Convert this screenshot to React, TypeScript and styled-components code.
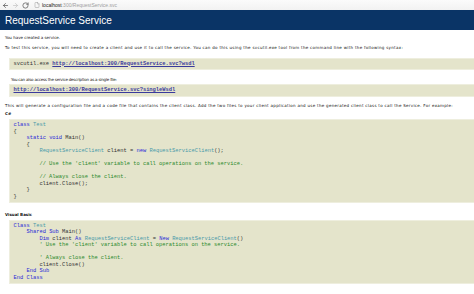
import { FC, ReactNode } from 'react';
import styled, { createGlobalStyle } from 'styled-components';
import { ArrowLeft, ArrowRight, RotateCw, File } from 'lucide-react';

const GlobalStyle = createGlobalStyle`
  body {
    margin: 0;
    background: #fff;
  }
`;

const Page = styled.div`
  width: 474px;
  height: 294px;
  overflow: hidden;
  font-family: "DejaVu Sans", Verdana, sans-serif;
  font-size: 4px;
  color: #111;
`;

const TopBar = styled.div`
  height: 10px;
  display: flex;
  align-items: center;
  gap: 3px;
  padding-left: 2px;
  background: linear-gradient(#fbfbfb, #f2f2f2);
  color: #555;
`;

const UrlBox = styled.div`
  display: flex;
  align-items: center;
  gap: 2px;
  margin-left: 2px;
  font-family: "Liberation Sans", Arial, sans-serif;
  font-size: 5px;
  color: #a0a0a0;

  b {
    font-weight: normal;
    color: #222;
  }
`;

const Heading = styled.h1`
  margin: 0;
  height: 20px;
  display: flex;
  align-items: center;
  padding: 1px 0 0 5px;
  box-sizing: border-box;
  background: #0a3466;
  color: #fff;
  font-family: "Liberation Sans", Tahoma, sans-serif;
  font-size: 10px;
  font-weight: normal;
`;

const Content = styled.div`
  padding-left: 5px;
`;

const Para = styled.p<{ top: number, indent?: number, spread?: number }>`
  margin: ${({ top }) => top}px 0 0 ${({ indent = 0 }) => indent}px;
  line-height: 5px;
  letter-spacing: ${({ spread = 0 }) => spread}px;
  white-space: nowrap;
`;

const Label = styled(Para)`
  font-weight: bold;
`;

const CodeBox = styled.div<{ top: number, pad: number }>`
  margin: ${({ top }) => top}px 0 0 4px;
  padding: ${({ pad }) => pad}px 3.5px;
  background: #e4e4cb;
  border: 1px solid #eeeede;
  border-right: none;
  font-family: "Liberation Mono", "Courier New", monospace;
  font-size: 5.4px;
  line-height: 6.5px;
  color: #333;
  overflow: hidden;
`;

const CodeLine = styled.div`
  height: 6.5px;
  white-space: pre;
`;

const Link = styled.span`
  color: #3a3a9c;
  text-decoration: underline;
  font-weight: bold;
`;

const Kw = styled.span`
  color: #2a2ad8;
`;

const Ty = styled.span`
  color: #4a9aaa;
`;

const Cm = styled.span`
  color: #2d8a2d;
`;

const Code: FC<{ top: number, pad?: number, lines: ReactNode[] }> = ({ top, pad = 2, lines }) =>
  <CodeBox top={top} pad={pad}>
    {lines.map((line, i) => <CodeLine key={i}>{line}</CodeLine>)}
  </CodeBox>

const csharp: ReactNode[] = [
  <><Kw>class</Kw> <Ty>Test</Ty></>,
  '{',
  <>{'    '}<Kw>static</Kw> <Kw>void</Kw> Main()</>,
  '    {',
  <>{'        '}<Ty>RequestServiceClient</Ty> client = <Kw>new</Kw> <Ty>RequestServiceClient</Ty>();</>,
  '',
  <>{'        '}<Cm>// Use the 'client' variable to call operations on the service.</Cm></>,
  '',
  <>{'        '}<Cm>// Always close the client.</Cm></>,
  '        client.Close();',
  '    }',
  '}',
];

const vb: ReactNode[] = [
  <><Kw>Class</Kw> <Ty>Test</Ty></>,
  <>{'    '}<Kw>Shared</Kw> <Kw>Sub</Kw> Main()</>,
  <>{'        '}<Kw>Dim</Kw> client <Kw>As</Kw> <Ty>RequestServiceClient</Ty> = <Kw>New</Kw> <Ty>RequestServiceClient</Ty>()</>,
  <>{'        '}<Cm>' Use the 'client' variable to call operations on the service.</Cm></>,
  '',
  <>{'        '}<Cm>' Always close the client.</Cm></>,
  '        client.Close()',
  <>{'    '}<Kw>End</Kw> <Kw>Sub</Kw></>,
  <><Kw>End</Kw> <Kw>Class</Kw></>,
];

const App: FC = () => {
  return <>
    <GlobalStyle />
    <Page>
      <TopBar>
        <ArrowLeft size={7} strokeWidth={2.5} />
        <ArrowRight size={7} strokeWidth={2.5} color="#c4c4c4" />
        <RotateCw size={7} strokeWidth={2.5} />
        <UrlBox>
          <File size={6} color="#9a9a9a" />
          <span><b>localhost</b>:300/RequestService.svc</span>
        </UrlBox>
      </TopBar>
      <Heading>RequestService Service</Heading>
      <Content>
        <Para top={4.5}>You have created a service.</Para>
        <Para top={5} spread={0.3}>To test this service, you will need to create a client and use it to call the service. You can do this using the svcutil.exe tool from the command line with the following syntax:</Para>
        <Code top={8} lines={[<>svcutil.exe <Link>http://localhost:300/RequestService.svc?wsdl</Link></>]} />
        <Para top={6.5} indent={6} spread={-0.2}>You can also access the service description as a single file:</Para>
        <Code top={2.5} lines={[<Link>http://localhost:300/RequestService.svc?singleWsdl</Link>]} />
        <Para top={6} spread={0.3}>This will generate a configuration file and a code file that contains the client class. Add the two files to your client application and use the generated client class to call the Service. For example:</Para>
        <Label top={3.5}>C#</Label>
        <Code top={3} lines={csharp} />
        <Label top={9}>Visual Basic</Label>
        <Code top={3} pad={1.5} lines={vb} />
      </Content>
    </Page>
  </>
}

export default App;
